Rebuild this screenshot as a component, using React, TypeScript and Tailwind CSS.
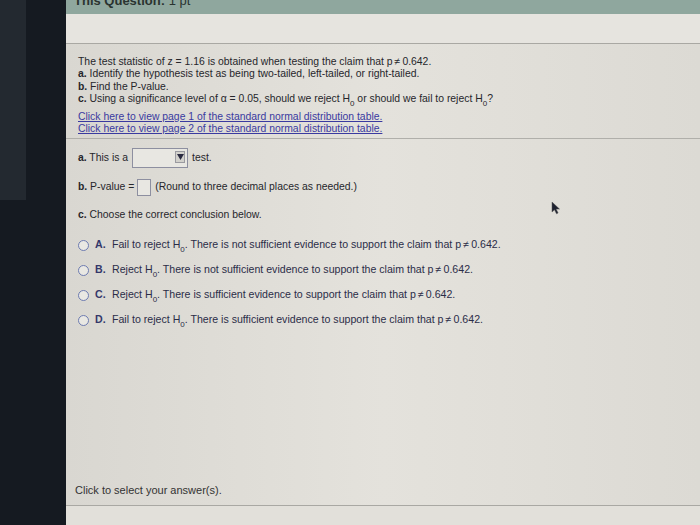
import React from 'react';

const H0 = () => (
  <span>
    H<sub className="text-[8px] align-[-2px]">0</sub>
  </span>
);

const Radio = () => (
  <span className="inline-block w-[11px] h-[11px] rounded-full border border-[#6d7bb0] bg-[#e9e8e3] shrink-0" />
);

const options: { letter: string; lead: string; rest: string }[] = [
  { letter: 'A.', lead: 'Fail to reject', rest: '. There is not sufficient evidence to support the claim that p\u2009\u2260\u20090.642.' },
  { letter: 'B.', lead: 'Reject', rest: '. There is not sufficient evidence to support the claim that p\u2009\u2260\u20090.642.' },
  { letter: 'C.', lead: 'Reject', rest: '. There is sufficient evidence to support the claim that p\u2009\u2260\u20090.642.' },
  { letter: 'D.', lead: 'Fail to reject', rest: '. There is sufficient evidence to support the claim that p\u2009\u2260\u20090.642.' },
];

export default function App() {
  return (
    <div
      className="relative w-[700px] h-[525px] flex overflow-hidden text-[10.4px] text-[#26262b]"
      style={{ fontFamily: '"Liberation Sans", Arial, sans-serif' }}
    >
      {/* dark bezel on the left */}
      <div className="w-[66px] shrink-0 flex flex-col bg-[#151a21]">
        <div className="h-[200px] w-[26px] bg-[#232930]" />
        <div className="flex-1" />
      </div>

      <div className="flex-1 flex flex-col bg-gradient-to-r from-[#d9d7d1] via-[#e4e2dc] to-[#dcdad4]">
        {/* header */}
        <div className="h-[14px] bg-[#8fa79e] overflow-hidden pl-[8px]">
          <div className="-mt-[7px] text-[13px] font-bold text-[#2a3330] leading-[16px]">
            This Question: <span className="font-normal">1 pt</span>
          </div>
        </div>
        <div className="h-[30px] border-b border-[#a9a8a3] bg-[#e6e4df]" />

        {/* question */}
        <div className="pl-[12px] pt-[12px] pb-[3px] border-b border-[#b0afaa] leading-[12.4px]">
          <p>The test statistic of z = 1.16 is obtained when testing the claim that p{'\u2009\u2260\u2009'}0.642.</p>
          <p><b>a.</b> Identify the hypothesis test as being two-tailed, left-tailed, or right-tailed.</p>
          <p><b>b.</b> Find the P-value.</p>
          <p>
            <b>c.</b> Using a significance level of {'\u03b1'} = 0.05, should we reject <H0 /> or should we fail to reject <H0 />?
          </p>
          <div className="mt-[5px] text-[#3a3aa0] leading-[12px]">
            <p className="underline">Click here to view page 1 of the standard normal distribution table.</p>
            <p className="underline">Click here to view page 2 of the standard normal distribution table.</p>
          </div>
        </div>

        {/* answers */}
        <div className="flex-1 flex flex-col pl-[12px] pt-[9px]">
          <div className="flex items-center gap-[4px] h-[21px]">
            <span><b>a.</b> This is a</span>
            <span className="w-[56px] h-[20px] border border-[#8d8fa0] bg-[#e8e7e2] flex justify-end items-start p-[2px]">
              <span className="w-[10px] h-[12px] bg-[#d2d1cc] border border-[#9a9aa0] flex items-center justify-center">
                <svg width="7" height="6" viewBox="0 0 7 6"><path d="M0 0h7L3.5 6z" fill="#2a2a40" /></svg>
              </span>
            </span>
            <span>test.</span>
          </div>

          <div className="flex items-center gap-[3px] h-[17px] mt-[10px]">
            <span><b>b.</b> P-value =</span>
            <span className="w-[14px] h-[17px] border border-[#8d8fa0] bg-[#e8e7e2]" />
            <span className="ml-[1px]">(Round to three decimal places as needed.)</span>
          </div>

          <p className="mt-[11px]"><b>c.</b> Choose the correct conclusion below.</p>

          <div className="mt-[17px] flex flex-col gap-[13px] text-[10.6px] text-[#2b2d48]">
            {options.map(o => (
              <div key={o.letter} className="flex items-center h-[12px]">
                <Radio />
                <b className="w-[17px] ml-[6px] text-[#34376a]">{o.letter}</b>
                <span>
                  {o.lead} <H0 />{o.rest}
                </span>
              </div>
            ))}
          </div>

          <div className="flex-1" />
          <p className="-ml-[3px] text-[11px] text-[#333] pb-[7px]">Click to select your answer(s).</p>
        </div>
        <div className="h-[20px] border-t border-[#a9a8a3] bg-[#e2e0da]" />
      </div>

      {/* mouse pointer */}
      <svg className="absolute left-[551px] top-[201px]" width="9" height="14" viewBox="0 0 9 14">
        <path d="M1 1v10l2.5-2.2 2 4 1.6-.8-2-3.9H8.5z" fill="#1e2230" stroke="#555" strokeWidth="0.5" />
      </svg>
    </div>
  );
}
